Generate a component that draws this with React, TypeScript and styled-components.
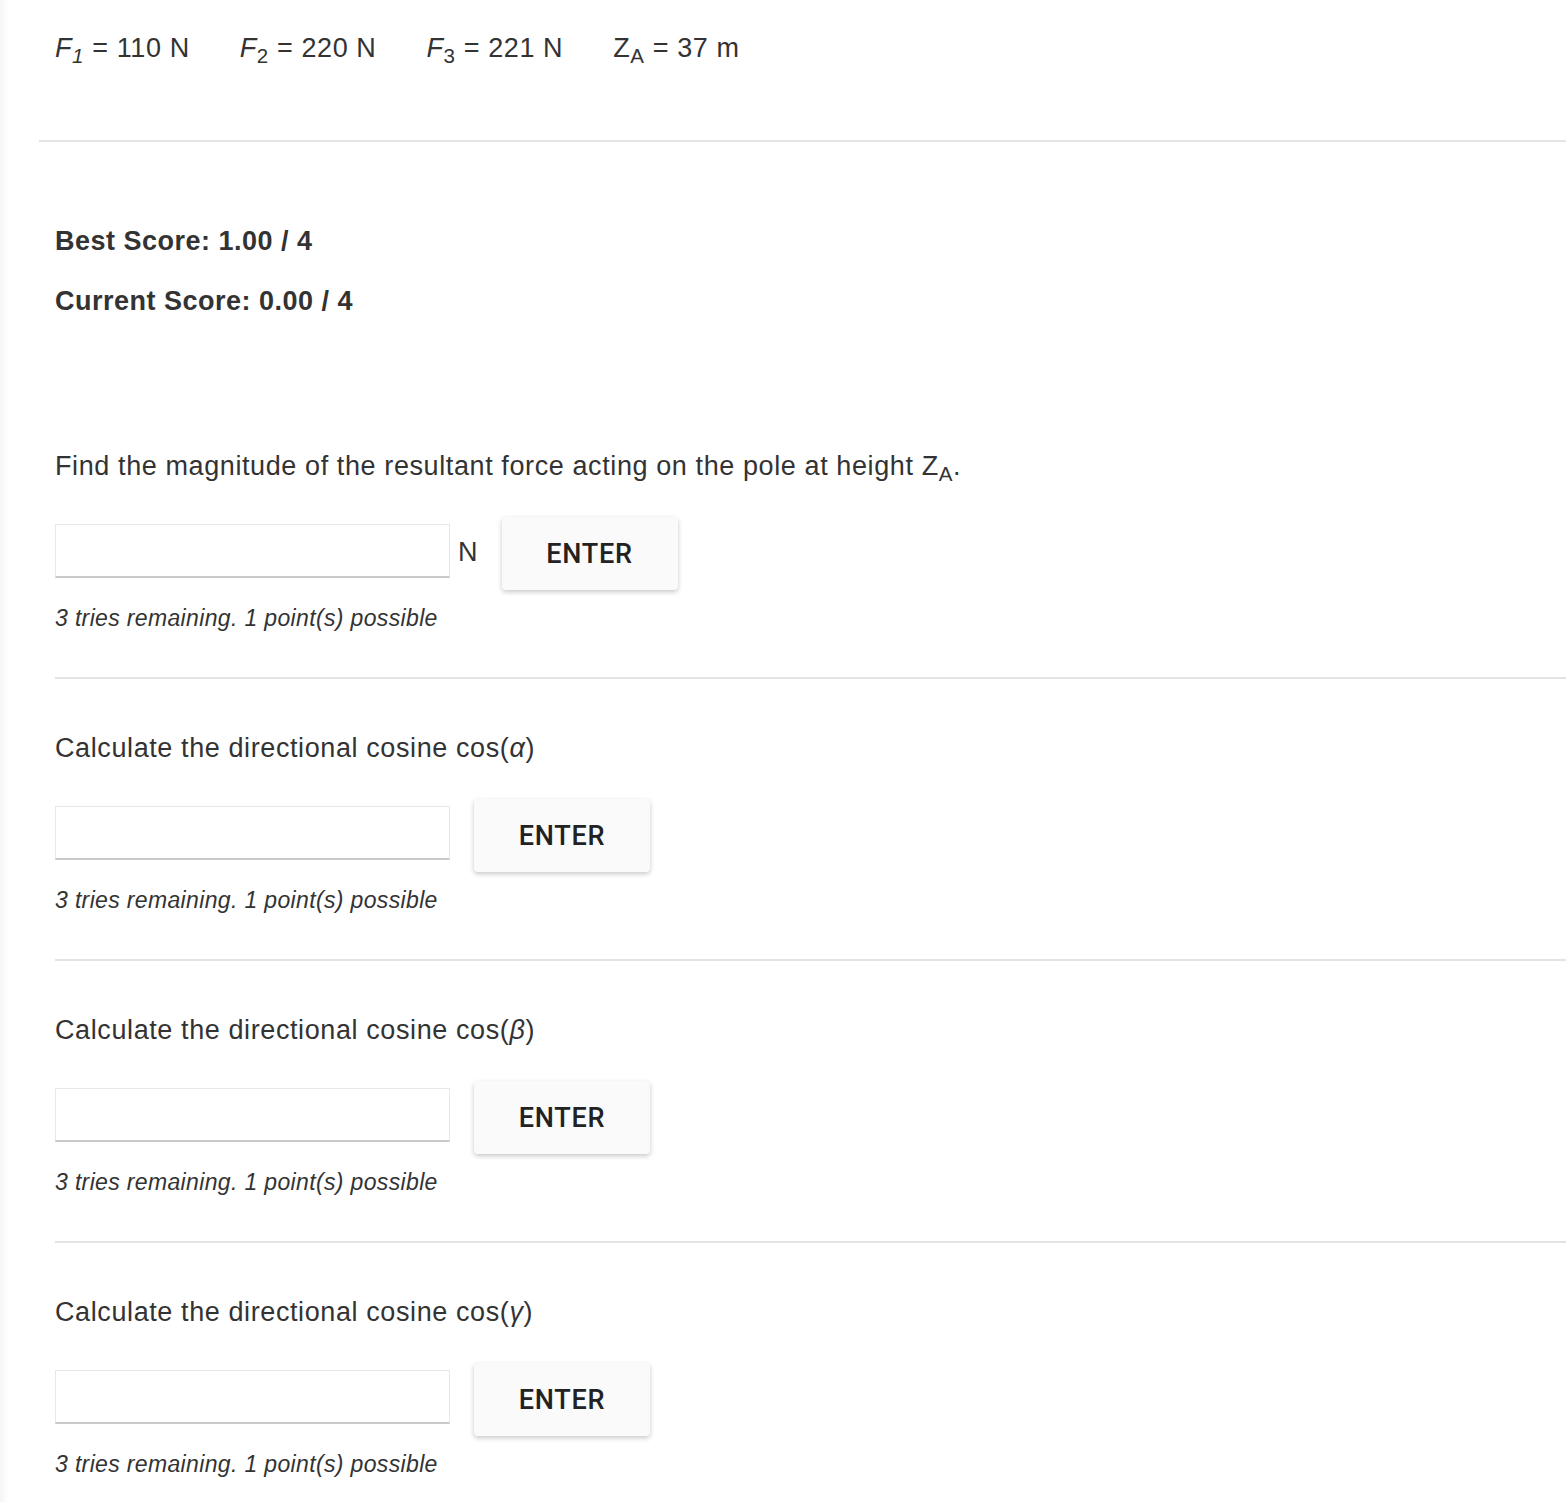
import React from 'react'
import styled, { createGlobalStyle } from 'styled-components'

const GlobalStyle = createGlobalStyle`
	html, body {
		margin: 0;
		padding: 0;
		background: #fff;
	}
	body {
		font-family: "Liberation Sans", Arial, Helvetica, sans-serif;
		color: #333;
	}
`

const Page = styled.div`
	min-height: 1502px;
	box-shadow: inset 8px 0 8px -6px rgba(0, 0, 0, 0.06);
	padding-bottom: 30px;
	box-sizing: border-box;
`

const Header = styled.div`
	margin-left: 39px;
	padding-top: 33px;
	border-bottom: 2px solid #e4e4e4;
`

const Givens = styled.div`
	display: flex;
	gap: 50px;
	padding-left: 16px;
	padding-bottom: 76px;
	font-size: 27px;
	line-height: 31px;
	letter-spacing: 0.6px;
`

const Given = styled.span`
	white-space: nowrap;
`

const Sym = styled.span<{ $italic?: boolean }>`
	font-style: ${p => (p.$italic ? 'italic' : 'normal')};
`

const Sub = styled.sub<{ $italic?: boolean }>`
	font-size: 0.76em;
	font-style: ${p => (p.$italic ? 'italic' : 'normal')};
	vertical-align: -0.3em;
	line-height: 0;
`

const Body = styled.div`
	padding-left: 55px;
`

const Scores = styled.div`
	display: flex;
	flex-direction: column;
	gap: 29px;
	padding-top: 84px;
	padding-bottom: 80px;
`

const ScoreLine = styled.div`
	font-size: 27px;
	line-height: 31px;
	font-weight: bold;
	letter-spacing: 0.5px;
`

const Question = styled.section<{ $last?: boolean }>`
	padding-top: 54px;
	padding-bottom: 46px;
	border-bottom: ${p => (p.$last ? 'none' : '2px solid #e4e4e4')};
`

const Prompt = styled.div`
	font-size: 27px;
	line-height: 31px;
	letter-spacing: 0.6px;
`

const AnswerRow = styled.div`
	display: flex;
	align-items: flex-start;
	margin-top: 35px;
`

const Field = styled.input`
	width: 395px;
	height: 54px;
	margin: 7px 0 0;
	box-sizing: border-box;
	border: 1px solid #e8e8e8;
	border-bottom: 2px solid #c9c9c9;
	background: #fff;
	font-size: 24px;
	padding: 0 10px;
	font-family: inherit;
	outline: none;
`

const Unit = styled.span`
	font-size: 27px;
	line-height: 31px;
	margin-left: 8px;
	margin-top: 20px;
`

const EnterButton = styled.button`
	width: 176px;
	height: 73px;
	margin-left: 24px;
	background: #fafafa;
	border: none;
	border-radius: 4px;
	box-shadow: 0 2px 5px rgba(0, 0, 0, 0.22);
	font-family: Roboto, "Liberation Sans", Arial, sans-serif;
	font-size: 27px;
	font-weight: 500;
	color: #222;
	letter-spacing: 0.8px;
	cursor: pointer;
`

const Tries = styled.div`
	margin-top: 15px;
	font-size: 23px;
	line-height: 26px;
	font-style: italic;
	letter-spacing: 0.35px;
	color: #333;
`

interface QuestionData {
	prompt: React.ReactNode
	unit?: string
}

const questions: QuestionData[] = [
	{
		prompt: (
			<>
				Find the magnitude of the resultant force acting on the pole at height Z<Sub>A</Sub>.
			</>
		),
		unit: 'N',
	},
	{
		prompt: (
			<>
				Calculate the directional cosine cos(<Sym $italic>α</Sym>)
			</>
		),
	},
	{
		prompt: (
			<>
				Calculate the directional cosine cos(<Sym $italic>β</Sym>)
			</>
		),
	},
	{
		prompt: (
			<>
				Calculate the directional cosine cos(<Sym $italic>γ</Sym>)
			</>
		),
	},
]

export default function App() {
	return (
		<>
			<GlobalStyle />
			<Page>
				<Header>
					<Givens>
						<Given>
							<Sym $italic>F</Sym>
							<Sub $italic>1</Sub> = 110 N
						</Given>
						<Given>
							<Sym $italic>F</Sym>
							<Sub>2</Sub> = 220 N
						</Given>
						<Given>
							<Sym $italic>F</Sym>
							<Sub>3</Sub> = 221 N
						</Given>
						<Given>
							Z<Sub>A</Sub> = 37 m
						</Given>
					</Givens>
				</Header>
				<Body>
					<Scores>
						<ScoreLine>Best Score: 1.00 / 4</ScoreLine>
						<ScoreLine>Current Score: 0.00 / 4</ScoreLine>
					</Scores>
					{questions.map((q, i) => (
						<Question key={i} $last={i === questions.length - 1}>
							<Prompt>{q.prompt}</Prompt>
							<AnswerRow>
								<Field type="text" />
								{q.unit && <Unit>{q.unit}</Unit>}
								<EnterButton>ENTER</EnterButton>
							</AnswerRow>
							<Tries>3 tries remaining. 1 point(s) possible</Tries>
						</Question>
					))}
				</Body>
			</Page>
		</>
	)
}
